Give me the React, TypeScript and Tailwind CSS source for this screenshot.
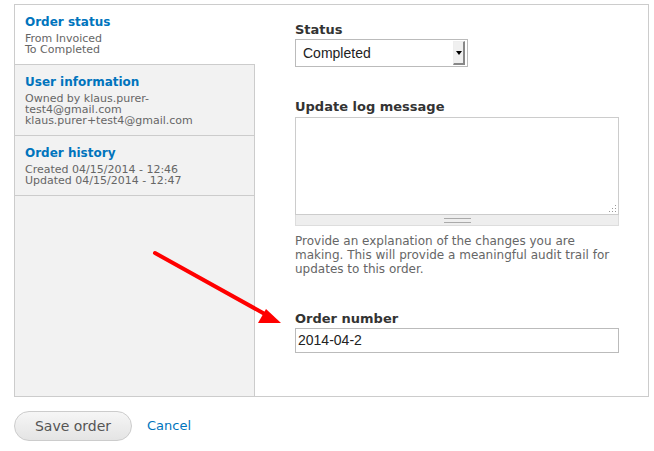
import React from 'react';

const sans = { fontFamily: '"DejaVu Sans", Verdana, sans-serif' };

interface TabProps {
  title: string;
  lines: string[];
  active?: boolean;
}

const Tab = ({ title, lines, active }: TabProps) => (
  <div
    className={
      active
        ? "relative -mr-px bg-white border-b border-[#ccc] pl-[10px] pr-2 pt-[10px] pb-[9px]"
        : "border-b border-[#ccc] pl-[10px] pr-2 pt-[10px] pb-[9px]"
    }
  >
    <div className="text-[12px] leading-[15px] font-bold text-[#0074bd]">{title}</div>
    <div className="mt-[3px] text-[11px] leading-[11px] text-[#666]">
      {lines.map((l) => (
        <div key={l}>{l}</div>
      ))}
    </div>
  </div>
);

const Arrow = () => (
  <svg className="absolute left-0 top-0 pointer-events-none" width="654" height="451">
    <line x1="155" y1="253" x2="272" y2="318" stroke="#ff0000" strokeWidth="4" strokeLinecap="round" />
    <polygon points="281,323 266,309 258,323" fill="#ff0000" />
  </svg>
);

export default function App() {
  return (
    <div className="relative w-[654px] h-[451px] bg-white text-[#333]" style={sans}>
      <div className="pt-[4px] pl-[14px]">
        <div className="flex w-[635px] h-[393px] border border-[#ccc]">
          <div className="w-[240px] shrink-0 bg-[#f2f2f2] border-r border-[#ccc]">
            <Tab active title="Order status" lines={["From Invoiced", "To Completed"]} />
            <Tab
              title="User information"
              lines={["Owned by klaus.purer-", "test4@gmail.com", "klaus.purer+test4@gmail.com"]}
            />
            <Tab title="Order history" lines={["Created 04/15/2014 - 12:46", "Updated 04/15/2014 - 12:47"]} />
          </div>

          <div className="flex-1 pl-[40px] pt-[17px]">
            <label className="block text-[13px] leading-[16px] font-bold">Status</label>
            <div className="mt-[1px] flex items-center w-[173px] h-[28px] border border-[#bbb] bg-white">
              <span
                className="flex-1 pl-[7px] text-[14px] text-[#222]"
                style={{ fontFamily: '"Liberation Sans", Arial, sans-serif' }}
              >
                Completed
              </span>
              <div className="mr-[2px] flex items-center justify-center w-[12px] h-[24px] bg-[#f0f0f0] border-r-2 border-b-2 border-[#888] border-l border-t border-l-[#eee] border-t-[#eee]">
                <svg width="6" height="4" viewBox="0 0 6 4">
                  <polygon points="0,0 6,0 3,4" fill="#000" />
                </svg>
              </div>
            </div>

            <label className="block mt-[32px] text-[13px] leading-[16px] font-bold">Update log message</label>
            <div className="mt-[2px] w-[324px]">
              <div className="relative h-[98px] border border-[#ccc] bg-white">
                <svg className="absolute right-[1px] bottom-[1px]" width="8" height="8">
                  <rect x="6" y="0" width="1" height="1" fill="#999" />
                  <rect x="3" y="3" width="1" height="1" fill="#999" />
                  <rect x="6" y="3" width="1" height="1" fill="#999" />
                  <rect x="0" y="6" width="1" height="1" fill="#999" />
                  <rect x="3" y="6" width="1" height="1" fill="#999" />
                  <rect x="6" y="6" width="1" height="1" fill="#999" />
                </svg>
              </div>
              <div className="flex items-center justify-center h-[11px] bg-[#eee] border border-t-0 border-[#ddd]">
                <div className="w-[27px] h-[5px] border-y border-[#aaa]" />
              </div>
            </div>
            <p className="mt-[8px] w-[330px] text-[12px] leading-[14px] text-[#666]">
              Provide an explanation of the changes you are making. This will provide a meaningful audit trail for
              updates to this order.
            </p>

            <label className="block mt-[35px] text-[13px] leading-[16px] font-bold">Order number</label>
            <div className="mt-[1px] flex items-center w-[324px] h-[25px] border border-[#bbb] bg-white">
              <span
                className="pl-[2px] text-[14px] text-[#222]"
                style={{ fontFamily: '"Liberation Sans", Arial, sans-serif' }}
              >
                2014-04-2
              </span>
            </div>
          </div>
        </div>

        <div className="mt-[14px] flex items-center gap-[15px]">
          <button className="w-[118px] h-[30px] rounded-[15px] border border-[#ccc] bg-gradient-to-b from-[#f6f6f6] to-[#e4e4e4] text-[14px] text-[#555]">
            Save order
          </button>
          <a className="text-[13px] text-[#0074bd]">Cancel</a>
        </div>
      </div>
      <Arrow />
    </div>
  );
}
